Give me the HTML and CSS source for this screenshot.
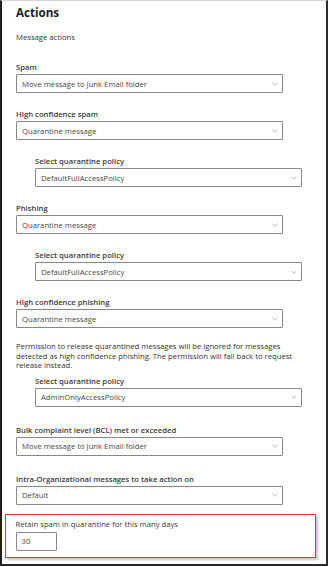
FILE: index.html
```html
<!DOCTYPE html>
<html>
<head>
<meta charset="utf-8">
<link rel="stylesheet" href="styles.css">
</head>
<body>
<div class="frame">
  <h1 class="title">Actions</h1>
  <p class="subtitle">Message actions</p>

  <div class="field first">
    <div class="label">Spam</div>
    <div class="select"><span>Move message to Junk Email folder</span><svg class="chev" viewBox="0 0 8 5"><path d="M0.5 0.6 L4 4.2 L7.5 0.6"/></svg></div>
  </div>

  <div class="field">
    <div class="label">High confidence spam</div>
    <div class="select"><span>Quarantine message</span><svg class="chev" viewBox="0 0 8 5"><path d="M0.5 0.6 L4 4.2 L7.5 0.6"/></svg></div>
  </div>

  <div class="field nested">
    <div class="label">Select quarantine policy</div>
    <div class="select"><span>DefaultFullAccessPolicy</span><svg class="chev" viewBox="0 0 8 5"><path d="M0.5 0.6 L4 4.2 L7.5 0.6"/></svg></div>
  </div>

  <div class="field">
    <div class="label">Phishing</div>
    <div class="select"><span>Quarantine message</span><svg class="chev" viewBox="0 0 8 5"><path d="M0.5 0.6 L4 4.2 L7.5 0.6"/></svg></div>
  </div>

  <div class="field nested">
    <div class="label">Select quarantine policy</div>
    <div class="select"><span>DefaultFullAccessPolicy</span><svg class="chev" viewBox="0 0 8 5"><path d="M0.5 0.6 L4 4.2 L7.5 0.6"/></svg></div>
  </div>

  <div class="field">
    <div class="label">High confidence phishing</div>
    <div class="select"><span>Quarantine message</span><svg class="chev" viewBox="0 0 8 5"><path d="M0.5 0.6 L4 4.2 L7.5 0.6"/></svg></div>
  </div>

  <p class="note">Permission to release quarantined messages will be ignored for messages detected as high confidence phishing. The permission will fall back to request release instead.</p>

  <div class="field nested after-note">
    <div class="label">Select quarantine policy</div>
    <div class="select"><span>AdminOnlyAccessPolicy</span><svg class="chev" viewBox="0 0 8 5"><path d="M0.5 0.6 L4 4.2 L7.5 0.6"/></svg></div>
  </div>

  <div class="field wide-gap">
    <div class="label">Bulk complaint level (BCL) met or exceeded</div>
    <div class="select"><span>Move message to Junk Email folder</span><svg class="chev" viewBox="0 0 8 5"><path d="M0.5 0.6 L4 4.2 L7.5 0.6"/></svg></div>
  </div>

  <div class="field wide-gap">
    <div class="label">Intra-Organizational messages to take action on</div>
    <div class="select"><span>Default</span><svg class="chev" viewBox="0 0 8 5"><path d="M0.5 0.6 L4 4.2 L7.5 0.6"/></svg></div>
  </div>

  <div class="highlight">
    <div class="label">Retain spam in quarantine for this many days</div>
    <div class="input">30</div>
  </div>
</div>
</body>
</html>
```

FILE: styles.css
```css
html, body {
  margin: 0;
  padding: 0;
  background: #ffffff;
}

body {
  font-family: "Open Sans", "Noto Sans", sans-serif;
  color: #323130;
}

.frame {
  box-sizing: border-box;
  width: 328px;
  height: 566px;
  border-left: 2px solid #1e1e1e;
  border-right: 2px solid #2a2a2a;
  border-bottom: 2px solid #2a2a2a;
  border-top: 1px solid #d6d6d6;
  padding: 0 0 0 14px;
  display: flex;
  flex-direction: column;
  overflow: hidden;
}

.title {
  margin: 3px 0 0 0;
  font-size: 11.6px;
  line-height: 18px;
  font-weight: 700;
  color: #201f1e;
}

.subtitle {
  margin: 10px 0 0 0;
  font-size: 7.7px;
  line-height: 10px;
  color: #323130;
}

.field {
  display: flex;
  flex-direction: column;
  margin-top: 16px;
}

.field.first {
  margin-top: 20px;
}

.field.nested {
  padding-left: 19px;
}

.field.after-note {
  margin-top: 5px;
}

.field.wide-gap {
  margin-top: 18px;
}

.label {
  font-size: 7.7px;
  line-height: 10px;
  font-weight: 600;
  color: #3b3a39;
  margin-bottom: 2px;
  white-space: nowrap;
}

.select {
  box-sizing: border-box;
  width: 267px;
  height: 19px;
  border: 1px solid #8a8886;
  border-radius: 1px;
  display: flex;
  align-items: center;
  justify-content: space-between;
  padding: 0 4px 0 5px;
  font-size: 7.7px;
  color: #484644;
}

.chev {
  width: 6px;
  height: 4px;
  fill: none;
  stroke: #8a8886;
  stroke-width: 0.8;
}

.note {
  margin: 14px 0 0 0;
  width: 284px;
  font-size: 7.7px;
  line-height: 9.5px;
  color: #323130;
}

.highlight {
  box-sizing: border-box;
  margin: 9px 0 0 -11px;
  width: 311px;
  height: 44px;
  border: 1.5px solid #e2353a;
  box-shadow: 2px 2px 2px rgba(0, 0, 0, 0.22);
  padding: 4px 0 0 9.5px;
  display: flex;
  flex-direction: column;
}

.highlight .label {
  font-weight: 400;
  margin-bottom: 3px;
}

.input {
  box-sizing: border-box;
  width: 41px;
  height: 19px;
  border: 1px solid #8a8886;
  border-radius: 1px;
  padding-left: 5px;
  font-size: 7.7px;
  line-height: 17px;
  color: #484644;
}
```
